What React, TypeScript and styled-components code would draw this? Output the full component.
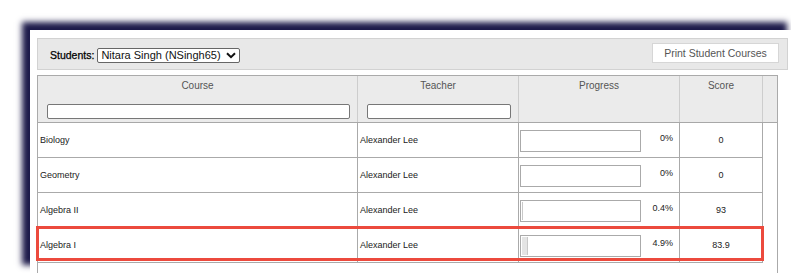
import React from "react";
import styled, { createGlobalStyle } from "styled-components";

const GlobalStyle = createGlobalStyle`
  html, body {
    margin: 0;
    padding: 0;
    background: #ffffff;
    overflow: hidden;
  }
  body {
    font-family: "Liberation Sans", Arial, sans-serif;
    color: #222;
  }
`;

const Panel = styled.div`
  margin: 30px 0 0 30px;
  width: 765px;
  height: 243px;
  box-sizing: border-box;
  padding: 8px 7px 0 7px;
  background: #ffffff;
  box-shadow: -8px -8px 6px #1d1a4a;
  display: flex;
  flex-direction: column;
`;

const Toolbar = styled.div`
  height: 32px;
  box-sizing: border-box;
  background: #e8e8e8;
  border: 1px solid #d2d2d2;
  display: flex;
  align-items: center;
  justify-content: space-between;
  padding: 0 8px 0 12px;
`;

const StudentPicker = styled.label`
  display: flex;
  align-items: center;
  gap: 3px;
  font-size: 10.5px;
  color: #000;
  margin-top: 2px;
  -webkit-text-stroke: 0.25px #000;
`;

const SelectWrap = styled.span`
  position: relative;
  display: inline-flex;
  -webkit-text-stroke: 0;
`;

const Select = styled.select`
  appearance: none;
  width: 143px;
  height: 15px;
  box-sizing: border-box;
  border: 1px solid #666;
  border-radius: 2px;
  background: #fff;
  padding: 0 18px 0 3px;
  font-family: "Liberation Sans", Arial, sans-serif;
  font-size: 11px;
  line-height: 13px;
  color: #111;
  outline: none;
`;

const Chevron = styled.svg`
  position: absolute;
  right: 4px;
  top: 4px;
  pointer-events: none;
`;

const PrintButton = styled.button`
  width: 127px;
  height: 20px;
  box-sizing: border-box;
  background: #ffffff;
  border: 1px solid #d6d6d6;
  border-radius: 0;
  padding: 0;
  font-family: "Liberation Sans", Arial, sans-serif;
  font-size: 10.5px;
  color: #555;
  margin-bottom: 3px;
`;

const TableBox = styled.div`
  flex: 1;
  margin: 5px 10px 0 0;
  border: 1px solid #aaa;
  border-bottom: none;
  display: flex;
  flex-direction: column;
`;

const columns = "320px 161px 161px 83px";

const HeaderRow = styled.div`
  display: grid;
  grid-template-columns: ${columns} 1fr;
  height: 47px;
  box-sizing: border-box;
  background: #ebebeb;
  border-bottom: 1px solid #a8a8a8;
`;

const HeaderCell = styled.div`
  border-right: 1px solid #cdcdcd;
  display: flex;
  flex-direction: column;
  padding-top: 4px;
  &:last-child {
    border-right: none;
  }
`;

const HeaderTitle = styled.div`
  text-align: center;
  font-size: 10px;
  line-height: 12px;
  color: #555;
`;

const FilterInput = styled.input`
  margin: 12px 0 0 9px;
  width: calc(100% - 16px);
  height: 15px;
  box-sizing: border-box;
  border: 1px solid #777;
  border-radius: 2px;
  background: #fff;
  padding: 0 3px;
  font-size: 10px;
  outline: none;
`;

const Body = styled.div`
  flex: 1;
  background: #fff;
`;

const Row = styled.div`
  position: relative;
  display: grid;
  grid-template-columns: ${columns};
  width: 725px;
  height: 35px;
  box-sizing: border-box;
  border-bottom: 1px solid #aaa;
`;

const Cell = styled.div<{ $align?: "left" | "center" }>`
  border-right: 1px solid #aaa;
  display: flex;
  align-items: center;
  justify-content: ${(p) => (p.$align === "center" ? "center" : "flex-start")};
  padding-left: ${(p) => (p.$align === "center" ? "0" : "2px")};
  font-size: 9px;
  color: #222;
`;

const ProgressCell = styled.div`
  border-right: 1px solid #aaa;
  display: flex;
  align-items: flex-start;
  padding: 7px 6px 0 1px;
`;

const Bar = styled.div`
  width: 121px;
  height: 22px;
  box-sizing: border-box;
  border: 1px solid #aaa;
  background: #fff;
  padding: 1px;
  display: flex;
`;

const Fill = styled.div`
  height: 100%;
  box-sizing: border-box;
  background: #e4e4e4;
  border-right: 1px solid #c8c8c8;
`;

const Percent = styled.span`
  margin-left: auto;
  margin-top: 3px;
  font-size: 9px;
  line-height: 11px;
  color: #222;
`;

const Highlight = styled.div`
  position: absolute;
  top: -2px;
  left: -2px;
  right: -1px;
  bottom: 1px;
  border: 3px solid #ec4a3d;
  pointer-events: none;
`;

type Course = {
  course: string;
  teacher: string;
  progress: number;
  score: string;
  highlight?: boolean;
};

const courses: Course[] = [
  { course: "Biology", teacher: "Alexander Lee", progress: 0, score: "0" },
  { course: "Geometry", teacher: "Alexander Lee", progress: 0, score: "0" },
  { course: "Algebra II", teacher: "Alexander Lee", progress: 0.4, score: "93" },
  { course: "Algebra I", teacher: "Alexander Lee", progress: 4.9, score: "83.9", highlight: true },
];

const App = () => {
  return (
    <>
      <GlobalStyle />
      <Panel>
        <Toolbar>
          <StudentPicker>
            Students:
            <SelectWrap>
              <Select defaultValue="NSingh65">
                <option value="NSingh65">Nitara Singh (NSingh65)</option>
              </Select>
              <Chevron width="10" height="7" viewBox="0 0 10 7">
                <path d="M1 1.2 L5 5.2 L9 1.2" fill="none" stroke="#111" strokeWidth="2" />
              </Chevron>
            </SelectWrap>
          </StudentPicker>
          <PrintButton>Print Student Courses</PrintButton>
        </Toolbar>

        <TableBox>
          <HeaderRow>
            <HeaderCell>
              <HeaderTitle>Course</HeaderTitle>
              <FilterInput />
            </HeaderCell>
            <HeaderCell>
              <HeaderTitle>Teacher</HeaderTitle>
              <FilterInput />
            </HeaderCell>
            <HeaderCell>
              <HeaderTitle>Progress</HeaderTitle>
            </HeaderCell>
            <HeaderCell>
              <HeaderTitle>Score</HeaderTitle>
            </HeaderCell>
            <HeaderCell />
          </HeaderRow>

          <Body>
            {courses.map((c) => (
              <Row key={c.course}>
                <Cell>{c.course}</Cell>
                <Cell>{c.teacher}</Cell>
                <ProgressCell>
                  <Bar>
                    {c.progress > 0 && <Fill style={{ width: `${c.progress}%` }} />}
                  </Bar>
                  <Percent>{c.progress}%</Percent>
                </ProgressCell>
                <Cell $align="center">{c.score}</Cell>
                {c.highlight && <Highlight />}
              </Row>
            ))}
          </Body>
        </TableBox>
      </Panel>
    </>
  );
};

export default App;
